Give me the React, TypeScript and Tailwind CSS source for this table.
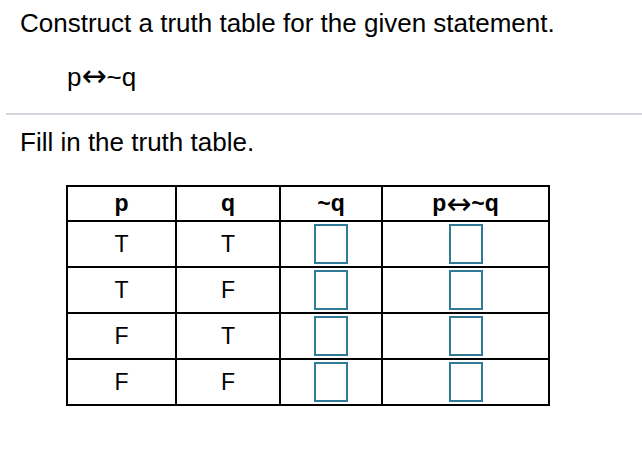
import React from "react";

const rows: [string, string][] = [
  ["T", "T"],
  ["T", "F"],
  ["F", "T"],
  ["F", "F"],
];

// the iff arrow looks much wider in the reference than Liberation's glyph
const Iff: React.FC<{ size: string }> = ({ size }) => (
  <span className={`font-['DejaVu_Sans',sans-serif] font-normal leading-none ${size}`}>↔</span>
);

const AnswerBox: React.FC = () => (
  <div className="w-[34px] h-[40px] border-2 border-[#317b96] bg-white" />
);

const App: React.FC = () => {
  return (
    <div className="w-[642px] h-[456px] bg-white text-black font-['Liberation_Sans',Arial,sans-serif]">
      <div className="pl-5 pt-2 text-[26px] leading-[30px]">
        Construct a truth table for the given statement.
      </div>
      <div className="pl-[67px] mt-[23px] text-[26px] leading-[30px]">
        p<Iff size="text-[30px]" />~q
      </div>
      <div className="ml-[6px] mt-[21px] h-[2px] bg-[#d3d6de]" />
      <div className="pl-5 mt-[12px] text-[26px] leading-[30px]">Fill in the truth table.</div>

      <div className="ml-[66px] mt-[28px] w-fit grid grid-cols-[107px_102px_100px_165px] grid-rows-[33px_44px_44px_44px_44px] gap-[2px] p-[2px] bg-black text-[23px]">
        <div className="bg-white flex items-center justify-center font-bold">p</div>
        <div className="bg-white flex items-center justify-center font-bold">q</div>
        <div className="bg-white flex items-center justify-center font-bold">~q</div>
        <div className="bg-white flex items-center justify-center font-bold">
          p<Iff size="text-[30px]" />~q
        </div>
        {rows.map(([p, q], i) => (
          <React.Fragment key={i}>
            <div className="bg-white flex items-center justify-center">{p}</div>
            <div className="bg-white flex items-center justify-center">{q}</div>
            <div className="bg-white flex items-center justify-center">
              <AnswerBox />
            </div>
            <div className="bg-white flex items-center justify-center">
              <AnswerBox />
            </div>
          </React.Fragment>
        ))}
      </div>
    </div>
  );
};

export default App;
